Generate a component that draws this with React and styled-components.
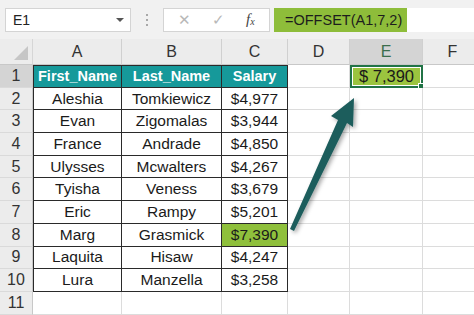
import React from 'react'
import { styled, createGlobalStyle } from 'styled-components'

const Global = createGlobalStyle`
  html, body { margin: 0; padding: 0; background: #fff; }
  body { font-family: "Liberation Sans", Arial, sans-serif; overflow: hidden; }
`;

const columns = ['A', 'B', 'C', 'D', 'E', 'F'];
const rows = [
  ['Aleshia', 'Tomkiewicz', '$4,977'],
  ['Evan', 'Zigomalas', '$3,944'],
  ['France', 'Andrade', '$4,850'],
  ['Ulysses', 'Mcwalters', '$4,267'],
  ['Tyisha', 'Veness', '$3,679'],
  ['Eric', 'Rampy', '$5,201'],
  ['Marg', 'Grasmick', '$7,390'],
  ['Laquita', 'Hisaw', '$4,247'],
  ['Lura', 'Manzella', '$3,258'],
];

export default function App() {
  return (
    <Page>
      <Global />
      <Toolbar>
        <NameBox>
          <span>E1</span>
          <Caret />
        </NameBox>
        <Dots>
          <i /><i /><i />
        </Dots>
        <FxButtons>
          <FxIcon>✕</FxIcon>
          <FxIcon>✓</FxIcon>
          <FxLabel>f<sub>x</sub></FxLabel>
        </FxButtons>
        <Formula>
          <FormulaText>=OFFSET(A1,7,2)</FormulaText>
          <FormulaRest />
        </Formula>
      </Toolbar>

      <Sheet>
        <Corner><CornerMark /></Corner>
        {columns.map((c) => (
          <ColHead key={c} $active={c === 'E'}>{c}</ColHead>
        ))}

        <RowHead $active>1</RowHead>
        <Cell $head $table $first>First_Name</Cell>
        <Cell $head $table>Last_Name</Cell>
        <Cell $head $table>Salary</Cell>
        <Cell />
        <Cell $picked>
          <PickedValue>$ 7,390</PickedValue>
          <Handle />
        </Cell>
        <Cell />

        {rows.map((r, i) => (
          <React.Fragment key={i}>
            <RowHead>{i + 2}</RowHead>
            <Cell $table $first>{r[0]}</Cell>
            <Cell $table>{r[1]}</Cell>
            <Cell $table $lime={i === 6}>{r[2]}</Cell>
            <Cell />
            <Cell />
            <Cell />
          </React.Fragment>
        ))}

        <RowHead>11</RowHead>
        <Cell /><Cell /><Cell /><Cell /><Cell /><Cell />
      </Sheet>

      <Arrow viewBox="0 0 474 315" width="474" height="315">
        <defs>
          <filter id="sh" x="-20%" y="-20%" width="140%" height="140%">
            <feDropShadow dx="2" dy="2" stdDeviation="2" floodColor="#000" floodOpacity="0.35" />
          </filter>
        </defs>
        <polygon
          points="290,229 338,120 331,116 354,98 353,127 347,123 294,231"
          fill="#1d5d5c"
          filter="url(#sh)"
        />
      </Arrow>
    </Page>
  )
}

const Page = styled.div`
  position: relative;
  width: 474px;
  height: 315px;
  overflow: hidden;
  background: #fff;
`;

const Toolbar = styled.div`
  display: flex;
  align-items: center;
  height: 39px;
  padding: 0 0 0 5px;
  box-sizing: border-box;
  background: #f1f1f1;
`;

const NameBox = styled.div`
  display: flex;
  align-items: center;
  justify-content: space-between;
  width: 126px;
  height: 24px;
  box-sizing: border-box;
  padding: 0 6px 0 7px;
  background: #fff;
  border: 1px solid #d4d4d4;
  font-size: 14px;
  color: #222;
`;

const Caret = styled.div`
  width: 0;
  height: 0;
  border-left: 4px solid transparent;
  border-right: 4px solid transparent;
  border-top: 4px solid #555;
`;

const Dots = styled.div`
  display: flex;
  flex-direction: column;
  gap: 3px;
  width: 32px;
  align-items: center;
  i {
    width: 2px;
    height: 2px;
    background: #a8a8a8;
  }
`;

const FxButtons = styled.div`
  display: flex;
  align-items: center;
  justify-content: space-around;
  width: 107px;
  height: 24px;
  box-sizing: border-box;
  padding: 0 4px;
  background: #fff;
  border: 1px solid #d4d4d4;
`;

const FxIcon = styled.span`
  font-size: 15px;
  color: #b8b8b8;
`;

const FxLabel = styled.span`
  font-family: "Liberation Serif", serif;
  font-style: italic;
  font-size: 15px;
  color: #444;
  sub {
    font-size: 10px;
    vertical-align: -1px;
  }
`;

const Formula = styled.div`
  display: flex;
  flex: 1;
  height: 24px;
  margin-left: 4px;
`;

const FormulaText = styled.div`
  display: flex;
  align-items: center;
  width: 133px;
  padding-left: 11px;
  box-sizing: border-box;
  background: #8ebd3a;
  font-size: 14.5px;
  color: #1d1d1d;
`;

const FormulaRest = styled.div`
  flex: 1;
  background: #fff;
`;

const Sheet = styled.div`
  display: grid;
  grid-template-columns: 33px 89px 100px 66px 62px 73px 60px;
  grid-template-rows: 26px repeat(11, 22.7px);
  font-size: 15.5px;
  color: #1a1a1a;
`;

const Corner = styled.div`
  position: relative;
  background: #ececec;
  border-right: 1px solid #d6d6d6;
  border-bottom: 1px solid #c8c8c8;
`;

const CornerMark = styled.div`
  position: absolute;
  right: 4px;
  bottom: 4px;
  width: 0;
  height: 0;
  border-left: 14px solid transparent;
  border-bottom: 14px solid #c6c6c6;
`;

const ColHead = styled.div`
  display: flex;
  align-items: center;
  justify-content: center;
  padding-top: 1px;
  background: ${(p) => (p.$active ? '#d4d4d4' : '#ececec')};
  color: ${(p) => (p.$active ? '#3b6e4c' : '#333')};
  border-right: 1px solid #d0d0d0;
  border-bottom: 1px solid #c8c8c8;
  font-size: 16px;
`;

const RowHead = styled.div`
  display: flex;
  align-items: center;
  justify-content: center;
  background: ${(p) => (p.$active ? '#d4d4d4' : '#ececec')};
  color: #333;
  border-right: 1px solid #c8c8c8;
  border-bottom: 1px solid #dadada;
  font-size: 16px;
`;

const Cell = styled.div`
  position: relative;
  display: flex;
  align-items: center;
  justify-content: center;
  box-sizing: border-box;
  white-space: nowrap;
  border-right: 1px solid ${(p) => (p.$table ? '#2a2a2a' : '#dcdcdc')};
  border-bottom: 1px solid ${(p) => (p.$table ? '#2a2a2a' : '#dcdcdc')};
  border-left: ${(p) => (p.$first ? '1px solid #2a2a2a' : 'none')};
  background: ${(p) => (p.$head ? '#16999a' : p.$lime ? '#8fc03c' : '#fff')};
  color: ${(p) => (p.$head ? '#fff' : '#1a1a1a')};
  font-weight: ${(p) => (p.$head ? 700 : 400)};
  ${(p) => p.$head && 'border-top: 1px solid #2a2a2a; font-size: 14.5px;'}
  ${(p) => p.$picked && `
    border: 2px solid #217346;
    background: #fff;
    padding: 1px;
  `}
`;

const PickedValue = styled.div`
  display: flex;
  align-items: center;
  justify-content: center;
  width: 100%;
  height: 100%;
  background: #9bc43f;
  color: #1a1a1a;
  font-size: 16.5px;
`;

const Handle = styled.div`
  position: absolute;
  right: -4px;
  bottom: -4px;
  width: 5px;
  height: 5px;
  background: #217346;
  border: 1px solid #fff;
`;

const Arrow = styled.svg`
  position: absolute;
  left: 0;
  top: 0;
  pointer-events: none;
`;
